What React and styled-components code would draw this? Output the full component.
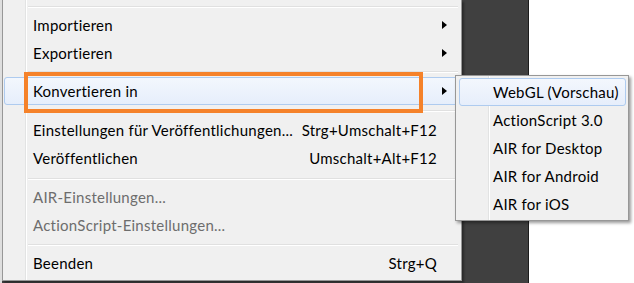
import React from "react";
import styled, { createGlobalStyle, css } from "styled-components";

const Global = createGlobalStyle`
  html, body { margin: 0; padding: 0; overflow: hidden; }
  body { font-family: Lato, "Open Sans", "DejaVu Sans", sans-serif; }
`;

const Stage = styled.div`
  position: relative;
  width: 634px;
  height: 283px;
  display: flex;
  background: #404040;
`;

const LeftStrip = styled.div`
  width: 2px;
  background: #dedede;
`;

const Menu = styled.div`
  box-sizing: border-box;
  width: 460px;
  height: 281px;
  align-self: flex-start;
  display: flex;
  flex-direction: column;
  padding: 0 1px 3px 1px;
  border: 1px solid #979797;
  border-top: none;
  box-shadow: 2px 2px 2px rgba(0, 0, 0, 0.35);
  background:
    linear-gradient(to right, transparent 22px, #e2e3e3 22px, #e2e3e3 23px, #ffffff 23px, #ffffff 24px, transparent 24px),
    #f0f0f0;
`;

const DarkPanel = styled.div`
  width: 66px;
  border-right: 1px solid #1c1c1c;
`;

const WhitePanel = styled.div`
  flex: 1;
  background: #ffffff;
`;

const Separator = styled.div`
  height: ${(p) => p.$h}px;
  box-sizing: border-box;
  padding: ${(p) => p.$top}px 2px 0 ${(p) => p.$left}px;
  &::after {
    content: "";
    display: block;
    border-top: 1px solid #e0e0e0;
    border-bottom: 1px solid #ffffff;
  }
`;

const highlight = css`
  border-color: #aecbef;
  background: linear-gradient(to bottom, #f3f7fd, #e6eefb);
`;

const Item = styled.div`
  box-sizing: border-box;
  height: 28px;
  display: grid;
  grid-template-columns: 1fr auto 22px;
  align-items: center;
  padding-left: ${(p) => p.$indent}px;
  border: 1px solid transparent;
  border-radius: 3px;
  font-size: 15px;
  letter-spacing: 0.25px;
  line-height: 26px;
  color: ${(p) => (p.$disabled ? "#6d6d6d" : "#000000")};
  white-space: nowrap;
  ${(p) => p.$active && highlight}
`;

const Label = styled.span``;

const Shortcut = styled.span`
  text-align: right;
`;

const ArrowCell = styled.span`
  display: flex;
  align-items: center;
  padding-left: 5px;
`;

const Arrow = () => (
  <svg width="5" height="8" viewBox="0 0 5 8">
    <path d="M0 0 L5 4 L0 8 Z" fill="#000" />
  </svg>
);

const Submenu = styled.div`
  position: absolute;
  left: 455px;
  top: 75px;
  box-sizing: border-box;
  width: 174px;
  padding: 2px 2px 2px 3px;
  border: 1px solid #979797;
  box-shadow: 2px 2px 3px rgba(0, 0, 0, 0.4);
  background:
    linear-gradient(to right, transparent 32px, #e2e3e3 32px, #e2e3e3 33px, #ffffff 33px, #ffffff 34px, transparent 34px),
    #f0f0f0;
`;

const SubItem = styled(Item)`
  grid-template-columns: 1fr;
  padding-left: 33px;
`;

const Callout = styled.div`
  position: absolute;
  left: 24px;
  top: 72px;
  width: 399px;
  height: 41px;
  box-sizing: border-box;
  border: 4px solid #f5822a;
  pointer-events: none;
`;

const mainItems = [
  { sep: { h: 11, top: 6 } },
  { label: "Importieren", arrow: true },
  { label: "Exportieren", arrow: true },
  { sep: { h: 10, top: 4 } },
  { label: "Konvertieren in", arrow: true, active: true },
  { sep: { h: 11, top: 5 } },
  { label: "Einstellungen für Veröffentlichungen...", shortcut: "Strg+Umschalt+F12" },
  { label: "Veröffentlichen", shortcut: "Umschalt+Alt+F12" },
  { sep: { h: 11, top: 6 } },
  { label: "AIR-Einstellungen...", disabled: true },
  { label: "ActionScript-Einstellungen...", disabled: true },
  { sep: { h: 10, top: 5 } },
  { label: "Beenden", shortcut: "Strg+Q" },
];

const subItems = [
  { label: "WebGL (Vorschau)", active: true },
  { label: "ActionScript 3.0" },
  { label: "AIR for Desktop" },
  { label: "AIR for Android" },
  { label: "AIR for iOS" },
];

export default function App() {
  return (
    <>
      <Global />
      <Stage>
        <LeftStrip />
        <Menu>
          {mainItems.map((it, i) =>
            it.sep ? (
              <Separator key={i} $h={it.sep.h} $top={it.sep.top} $left={24} />
            ) : (
              <Item key={i} $indent={28} $active={it.active} $disabled={it.disabled}>
                <Label>{it.label}</Label>
                <Shortcut>{it.shortcut || ""}</Shortcut>
                <ArrowCell>{it.arrow ? <Arrow /> : null}</ArrowCell>
              </Item>
            )
          )}
        </Menu>
        <DarkPanel />
        <WhitePanel />
        <Submenu>
          {subItems.map((it) => (
            <SubItem key={it.label} $active={it.active}>
              <Label>{it.label}</Label>
            </SubItem>
          ))}
        </Submenu>
        <Callout />
      </Stage>
    </>
  );
}
